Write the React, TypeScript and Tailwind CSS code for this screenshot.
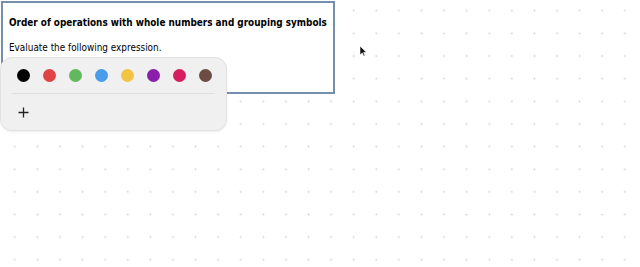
import React from 'react';

const colours = ['#000000', '#e04343', '#62b85e', '#4a9bea', '#f4c344', '#8a1fab', '#d61d5f', '#6d4c44'];

const App: React.FC = () => {
  return (
    <div className="relative w-[640px] h-[267px] overflow-hidden bg-white bg-[radial-gradient(circle,#d6d6d6_0.8px,transparent_1.2px)] bg-[length:22.6px_22.65px] bg-[position:3.5px_-0.6px] font-['DejaVu_Sans_Condensed','DejaVu_Sans',sans-serif]">
      {/* Question card */}
      <div className="ml-[1px] mt-[1px] w-[334px] h-[93px] border-2 border-[#7590ab] bg-white px-[6px] pt-[13px] text-black">
        <div className="whitespace-nowrap text-[9.9px] font-bold leading-[13px]">Order of operations with whole numbers and grouping symbols</div>
        <div className="mt-[12px] whitespace-nowrap text-[9.9px] leading-[13px]">Evaluate the following expression.</div>
      </div>

      {/* Colour picker popup */}
      <div className="absolute left-0 top-[57px] w-[227px] h-[74px] rounded-[12px] bg-[#f0f0f0] border border-[#e2e2e2] shadow-[0_1px_2px_rgba(0,0,0,0.08)]">
        <div className="flex gap-[13px] pl-[16px] pt-[11px] pb-[11px]">
          {colours.map((c) => (
            <div key={c} className="w-[13px] h-[13px] rounded-full" style={{ backgroundColor: c }} />
          ))}
        </div>
        <div className="mx-[11px] h-px bg-[#dedede]" />
        <div className="pl-[16px] pt-[12px]">
          <svg width="13" height="13" viewBox="0 0 13 13" className="block">
            <path d="M6.5 1.5v10M1.5 6.5h10" stroke="#222" strokeWidth="1.3" />
          </svg>
        </div>
      </div>

      {/* Mouse cursor */}
      <svg className="absolute left-[359px] top-[45px]" width="8" height="12" viewBox="0 0 8 12">
        <path d="M1 1v9l2.2-2.1 1.5 3.2 1.3-.6-1.5-3.1H7.5z" fill="#111" stroke="#fff" strokeWidth="0.6" />
      </svg>
    </div>
  );
};

export default App;
